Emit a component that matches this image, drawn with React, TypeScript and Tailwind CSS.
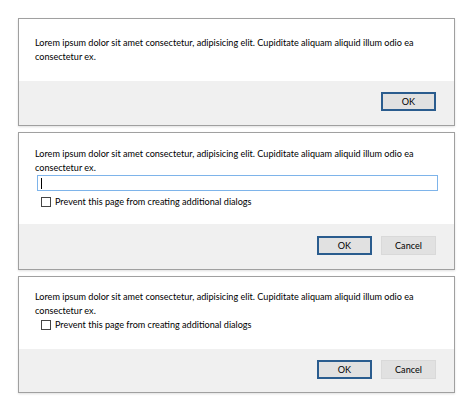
import React from "react";

const TEXT =
  "Lorem ipsum dolor sit amet consectetur, adipisicing elit. Cupiditate aliquam aliquid illum odio ea consectetur ex.";

function OkButton() {
  return (
    <button className="w-[55px] h-[19px] bg-[#e1e1e1] border-2 border-[#2a5c8e] flex items-center justify-center text-black leading-[14px]">
      OK
    </button>
  );
}

function CancelButton() {
  return (
    <button className="w-[55px] h-[19px] bg-[#e1e1e1] border border-[#d9d9d9] flex items-center justify-center text-black leading-[14px]">
      Cancel
    </button>
  );
}

function Check() {
  return (
    <div className="h-[14px] flex items-center pl-[6px] gap-[4px]">
      <span className="w-[10px] h-[10px] border border-[#444444] bg-white shrink-0" />
      <span>Prevent this page from creating additional dialogs</span>
    </div>
  );
}

export default function App() {
  return (
    <div className="min-h-[412px] bg-white pt-[18px] pl-[18px] flex flex-col gap-[6px] text-[9.1px] leading-[14px] text-black font-['Lato',sans-serif]">
      {/* Dialog 1 */}
      <div className="w-[437px] border border-[#a0a0a0] shadow-[0_1px_2px_rgba(0,0,0,0.12)] bg-white">
        <div className="px-[16px] pt-[17px] pb-[17px]">
          <p>{TEXT}</p>
        </div>
        <div className="bg-[#f0f0f0] flex justify-end gap-[9px] pt-[11px] pb-[14px] pr-[18px]">
          <OkButton />
        </div>
      </div>

      {/* Dialog 2 */}
      <div className="w-[437px] border border-[#a0a0a0] shadow-[0_1px_2px_rgba(0,0,0,0.12)] bg-white">
        <div className="px-[16px] pt-[14px] pb-[15px] flex flex-col">
          <p>{TEXT}</p>
          <div className="ml-[2px] h-[16px] border border-[#7eb4ea] bg-white flex items-center pl-[3px]">
            <span className="w-px h-[11px] bg-black" />
          </div>
          <div className="mt-[4px]">
            <Check />
          </div>
        </div>
        <div className="bg-[#f0f0f0] flex justify-end gap-[9px] pt-[12px] pb-[14px] pr-[18px]">
          <OkButton />
          <CancelButton />
        </div>
      </div>

      {/* Dialog 3 */}
      <div className="w-[437px] border border-[#a0a0a0] shadow-[0_1px_2px_rgba(0,0,0,0.12)] bg-white">
        <div className="px-[16px] pt-[13px] pb-[17px] flex flex-col">
          <p>{TEXT}</p>
          <Check />
        </div>
        <div className="bg-[#f0f0f0] flex justify-end gap-[9px] pt-[11px] pb-[13px] pr-[18px]">
          <OkButton />
          <CancelButton />
        </div>
      </div>
    </div>
  );
}
